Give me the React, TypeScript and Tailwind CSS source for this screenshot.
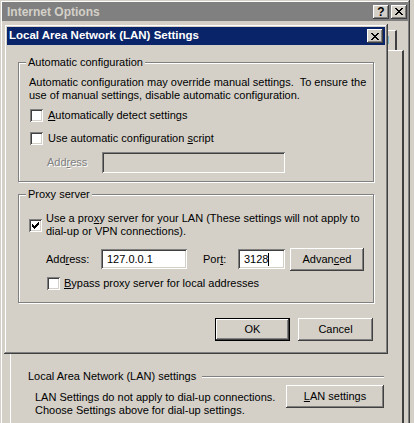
import React from "react";

// classic Windows bevels
const raised =
  "shadow-[inset_-1px_-1px_0_#404040,inset_1px_1px_0_#ffffff,inset_-2px_-2px_0_#808080,inset_2px_2px_0_#d4d0c8]";
const windowFrame =
  "shadow-[inset_-1px_-1px_0_#404040,inset_1px_1px_0_#d4d0c8,inset_-2px_-2px_0_#808080,inset_2px_2px_0_#ffffff]";
const sunken =
  "shadow-[inset_1px_1px_0_#808080,inset_-1px_-1px_0_#ffffff,inset_2px_2px_0_#404040,inset_-2px_-2px_0_#d4d0c8]";

function CloseGlyph() {
  return (
    <svg width="8" height="7" viewBox="0 0 8 7" shapeRendering="crispEdges">
      <path
        d="M0 0h2v1h-2zM6 0h2v1h-2zM1 1h2v1h-2zM5 1h2v1h-2zM2 2h4v1h-4zM3 3h2v1h-2zM2 4h4v1h-4zM1 5h2v1h-2zM5 5h2v1h-2zM0 6h2v1h-2zM6 6h2v1h-2z"
        fill="#000"
      />
    </svg>
  );
}

function CaptionButton({ children }: { children: React.ReactNode }) {
  return (
    <div className={`w-[16px] h-[14px] bg-[#d4d0c8] flex items-center justify-center ${raised}`}>
      {children}
    </div>
  );
}

function Checkbox({ checked = false }: { checked?: boolean }) {
  return (
    <div className={`w-[13px] h-[13px] shrink-0 bg-white flex items-center justify-center ${sunken}`}>
      {checked && (
        <svg width="7" height="7" viewBox="0 0 7 7" shapeRendering="crispEdges">
          <path d="M6 0h1v3h-1zM5 1h1v3h-1zM4 2h1v3h-1zM3 3h1v3h-1zM2 4h1v3h-1zM1 3h1v3h-1zM0 2h1v3h-1z" fill="#000" />
        </svg>
      )}
    </div>
  );
}

function Button({ label, w, isDefault = false }: { label: React.ReactNode; w: string; isDefault?: boolean }) {
  return (
    <div
      className={`${w} h-[23px] flex items-center justify-center bg-[#d4d0c8] ${
        isDefault
          ? "border border-black shadow-[inset_-1px_-1px_0_#404040,inset_1px_1px_0_#ffffff,inset_-2px_-2px_0_#808080]"
          : raised
      }`}
    >
      {label}
    </div>
  );
}

function Group({ title, h, children }: { title: string; h: string; children: React.ReactNode }) {
  return (
    <div
      className={`relative ${h} border border-[#808080] shadow-[1px_1px_0_#ffffff,inset_1px_1px_0_#ffffff]`}
    >
      <span className="absolute left-[7px] top-[-7px] px-[2px] bg-[#d4d0c8] leading-[13px]">{title}</span>
      {children}
    </div>
  );
}

export default function App() {
  return (
    <div className="relative w-[414px] h-[423px] overflow-hidden bg-[#d4d0c8] text-[11px] text-black font-['Liberation_Sans',Arial,sans-serif]">
      {/* Internet Options window (behind) */}
      <div className={`absolute left-0 top-0 w-[410px] h-[440px] flex flex-col p-[2px] bg-[#d4d0c8] ${windowFrame}`}>
        <div className="h-[19px] bg-[#808080] flex items-center justify-between pl-[5px] pr-[1px]">
          <span className="font-bold text-[#d4d0c8] text-[12px]">Internet Options</span>
          <div className="flex gap-[2px]">
            <CaptionButton>
              <span className="font-bold text-[12px] leading-none">?</span>
            </CaptionButton>
            <CaptionButton>
              <CloseGlyph />
            </CaptionButton>
          </div>
        </div>
        <div className="flex-1 flex flex-col pt-[9px] pl-[8px] pr-[4px]">
          <div className="h-[20px] flex justify-end pr-[7px]">
            <div className="h-[20px] px-[6px] flex items-center border-t border-l border-white border-r-2 border-r-[#404040] text-[#0a246a]">
              Advanced
            </div>
          </div>
          <div className="flex-1 flex flex-col border-t border-l border-white border-r-2 border-r-[#404040] pt-[319px] pl-[17px] pr-[18px]">
            <div className="flex items-center h-[13px]">
              <span>Local Area Network (LAN) settings</span>
              <div className="flex-1 ml-[6px] border-t border-[#808080] border-b border-b-white" />
            </div>
            <div className="flex items-start mt-[2px]">
              <div className="pl-[7px] pt-[6px] leading-[13px] flex-1">
                <div>LAN Settings do not apply to dial-up connections.</div>
                <div>Choose Settings above for dial-up settings.</div>
              </div>
              <Button
                w="w-[98px]"
                label={
                  <span>
                    <u>L</u>AN settings
                  </span>
                }
              />
            </div>
          </div>
        </div>
      </div>

      {/* LAN Settings dialog (front) */}
      <div className={`absolute left-[4px] top-[24px] w-[384px] h-[330px] flex flex-col p-[3px] bg-[#d4d0c8] ${windowFrame}`}>
        <div className="h-[18px] shrink-0 bg-[#0a246a] flex items-center justify-between pl-[2px] pr-[2px]">
          <span className="font-bold text-white text-[11.5px]">Local Area Network (LAN) Settings</span>
          <CaptionButton>
            <CloseGlyph />
          </CaptionButton>
        </div>

        <div className="flex flex-col pl-[11px] pr-[11px] mt-[17px]">
          <Group title="Automatic configuration" h="h-[120px]">
            <div className="flex flex-col pl-[10px] pt-[13px]">
              <div className="leading-[13px]">
                <div>Automatic configuration may override manual settings.&nbsp; To ensure the</div>
                <div>use of manual settings, disable automatic configuration.</div>
              </div>
              <div className="flex items-center gap-[5px] mt-[7px] pl-[1px] h-[13px]">
                <Checkbox />
                <span>
                  <u>A</u>utomatically detect settings
                </span>
              </div>
              <div className="flex items-center gap-[5px] mt-[10px] pl-[1px] h-[13px]">
                <Checkbox />
                <span>
                  Use automatic configuration <u>s</u>cript
                </span>
              </div>
              <div className="flex items-center mt-[7px] pl-[18px] h-[21px]">
                <span className="w-[55px] text-[#808080] [text-shadow:1px_1px_0_#ffffff]">
                  Add<u>r</u>ess
                </span>
                <div className="w-[183px] h-[21px] shadow-[inset_1px_1px_0_#808080,inset_-1px_-1px_0_#ffffff,inset_2px_2px_0_#404040,inset_-2px_-2px_0_#d4d0c8]" />
              </div>
            </div>
          </Group>

          <div className="mt-[12px]">
            <Group title="Proxy server" h="h-[109px]">
              <div className="flex flex-col pl-[10px] pt-[17px]">
                <div className="flex items-center gap-[4px] h-[26px]">
                  <Checkbox checked />
                  <div className="leading-[13px]">
                    <div>
                      Use a pro<u>x</u>y server for your LAN (These settings will not apply to
                    </div>
                    <div>dial-up or VPN connections).</div>
                  </div>
                </div>
                <div className="flex items-center mt-[10px] pl-[17px] h-[22px]">
                  <span className="w-[55px]">
                    Add<u>r</u>ess:
                  </span>
                  <div className={`w-[86px] h-[20px] bg-white flex items-center pl-[6px] ${sunken}`}>127.0.0.1</div>
                  <span className="ml-[16px] w-[35px]">
                    Por<u>t</u>:
                  </span>
                  <div className={`w-[47px] h-[20px] bg-white flex items-center pl-[6px] ${sunken}`}>
                    3128<span className="w-px h-[13px] bg-black" />
                  </div>
                  <div className="ml-[5px]">
                    <Button
                      w="w-[74px]"
                      label={
                        <span>
                          Advan<u>c</u>ed
                        </span>
                      }
                    />
                  </div>
                </div>
                <div className="flex items-center gap-[4px] mt-[7px] pl-[18px] h-[13px]">
                  <Checkbox />
                  <span>
                    <u>B</u>ypass proxy server for local addresses
                  </span>
                </div>
              </div>
            </Group>
          </div>

          <div className="flex justify-end gap-[8px] mt-[15px] pr-[1px]">
            <Button w="w-[75px]" label="OK" isDefault />
            <Button w="w-[75px]" label="Cancel" />
          </div>
        </div>
      </div>
    </div>
  );
}
